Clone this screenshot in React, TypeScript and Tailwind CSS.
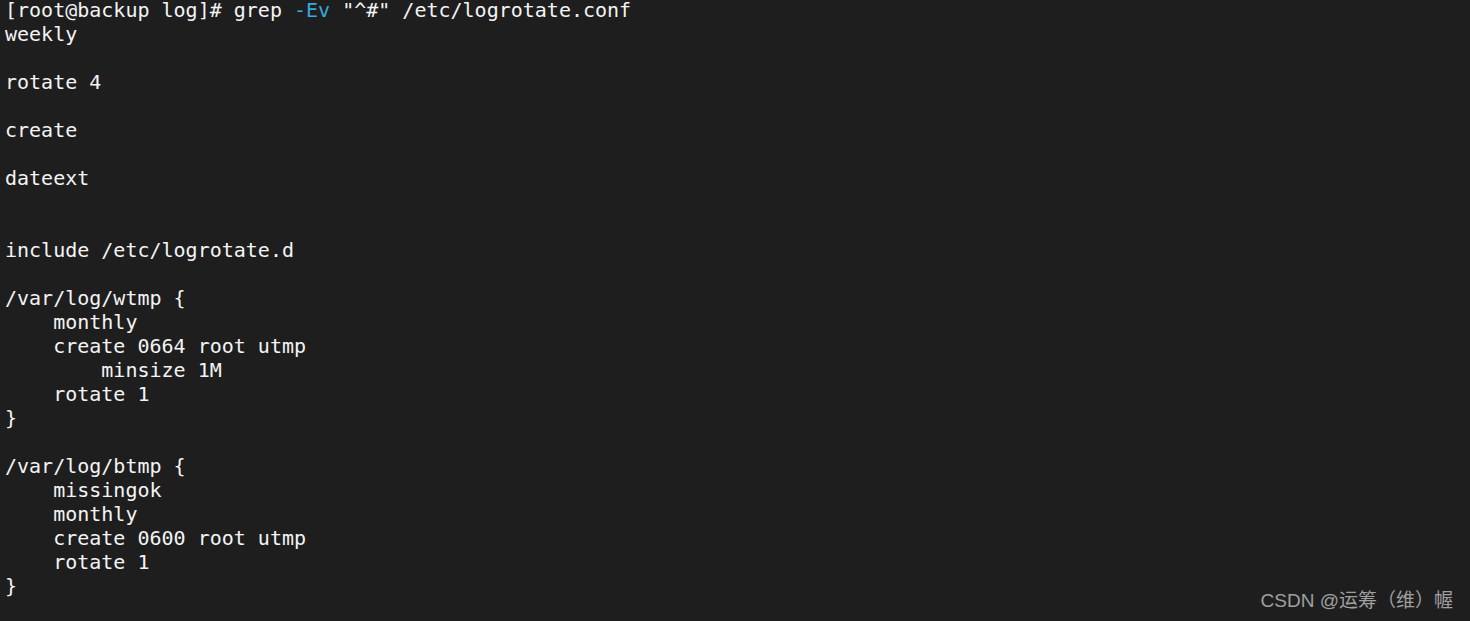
const lines: string[] = [
  "weekly",
  "",
  "rotate 4",
  "",
  "create",
  "",
  "dateext",
  "",
  "",
  "include /etc/logrotate.d",
  "",
  "/var/log/wtmp {",
  "    monthly",
  "    create 0664 root utmp",
  "        minsize 1M",
  "    rotate 1",
  "}",
  "",
  "/var/log/btmp {",
  "    missingok",
  "    monthly",
  "    create 0600 root utmp",
  "    rotate 1",
  "}",
];

export default function App() {
  return (
    <div className="relative w-[1470px] h-[621px] overflow-hidden bg-[#1e1e1e]">
      <pre
        className="m-0 pl-[5px] text-[20px] leading-[24px] text-[#f4f4f4] whitespace-pre"
        style={{ fontFamily: '"DejaVu Sans Mono", "Liberation Mono", monospace' }}
      >
        <div className="h-[22px] leading-[20px]">
          [root@backup log]# grep <span className="text-[#3aa8e0]">-Ev</span> "^#" /etc/logrotate.conf
        </div>
        {lines.map((l, i) => (
          <div key={i} className="h-[24px]">
            {l}
          </div>
        ))}
      </pre>
      <div
        className="absolute right-[17px] bottom-[8px] text-[19px] leading-[24px] text-[#a0a0a0]"
        style={{ fontFamily: '"Liberation Sans", "Noto Sans CJK SC", sans-serif' }}
      >
        CSDN @运筹（维）幄
      </div>
    </div>
  );
}
